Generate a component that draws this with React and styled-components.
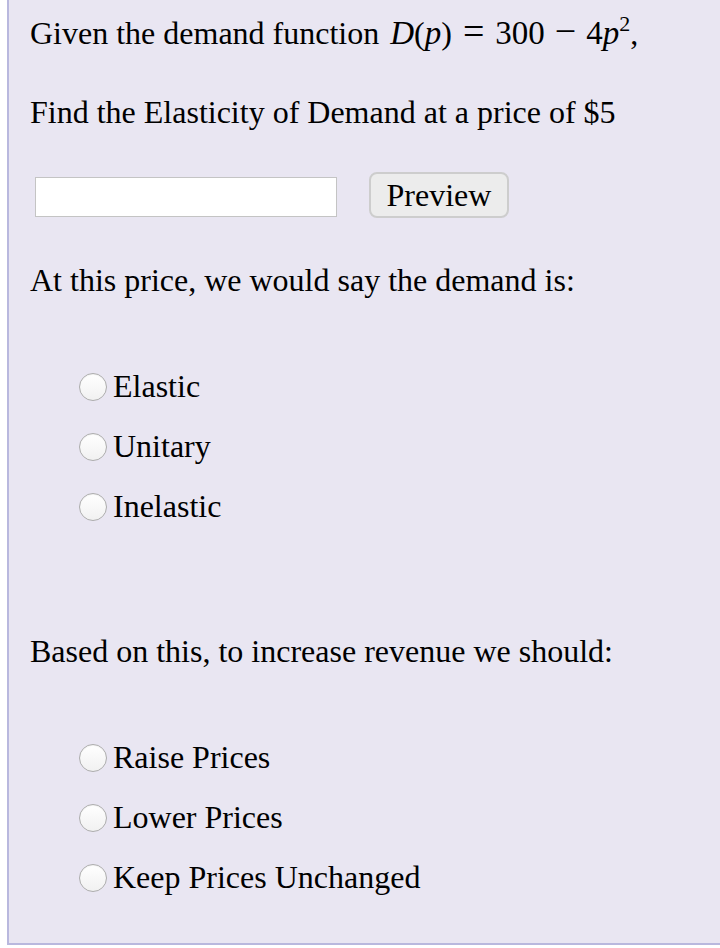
import React from "react";
import styled, { createGlobalStyle } from "styled-components";

const GlobalStyle = createGlobalStyle`
    body {
        margin: 0;
        background: #ffffff;
        font-family: "Liberation Serif", "Times New Roman", serif;
        color: #000;
        overflow: hidden;
    }
`;

const Panel = styled.div`
    margin-left: 7px;
    height: 945px;
    box-sizing: border-box;
    background-color: #e9e6f2;
    border-left: 2px solid #b9b8de;
    border-bottom: 2px solid #b9b8de;
    padding: 15px 0 0 21px;
    overflow: hidden;
`;

const Line = styled.div`
    font-size: 32px;
    line-height: 37px;
    height: 37px;
    white-space: nowrap;
    margin-top: ${(p) => p.$top || 0}px;
`;

const Math = styled.span`
    margin-left: 3px;
`;

const Var = styled.i`
    font-family: "Liberation Serif", serif;
    font-size: 33px;
`;

const Op = styled.span`
    display: inline-block;
    font-size: ${(p) => p.$size || 32}px;
    line-height: 30px;
    margin: 0 ${(p) => p.$space || 12}px;
`;

const Digits = styled.span`
    font-size: 33px;
`;

const Sup = styled.sup`
    font-size: 22px;
    line-height: 0;
    vertical-align: 13px;
`;

const AnswerRow = styled.div`
    display: flex;
    align-items: center;
    gap: 32px;
    margin-top: 41px;
    height: 46px;
    padding-left: 5px;
`;

const AnswerInput = styled.input`
    width: 302px;
    height: 40px;
    margin-top: 4px;
    box-sizing: border-box;
    border: 1px solid #c4c4c4;
    background: #ffffff;
    outline: none;
    font-size: 28px;
`;

const PreviewButton = styled.button`
    width: 140px;
    height: 46px;
    box-sizing: border-box;
    border: 2px solid #cdcdcd;
    border-radius: 8px;
    background: #ececec;
    font-family: "Liberation Serif", serif;
    font-size: 32px;
    color: #000;
    padding: 0;
`;

const Choices = styled.div`
    display: flex;
    flex-direction: column;
    gap: 23px;
    margin-top: ${(p) => p.$top}px;
    padding-left: 49px;
`;

const Choice = styled.label`
    display: flex;
    align-items: center;
    gap: 6px;
    height: 37px;
    font-size: 32px;
    line-height: 37px;
`;

const Radio = styled.input.attrs({ type: "radio" })`
    appearance: none;
    margin: 0;
    width: 28px;
    height: 28px;
    border-radius: 50%;
    border: 1px solid #adadad;
    background: linear-gradient(#ffffff, #f1f1f1);
    box-shadow: inset 0 1px 1px rgba(0, 0, 0, 0.05);
`;

const priceChoices = ["Elastic", "Unitary", "Inelastic"];
const revenueChoices = ["Raise Prices", "Lower Prices", "Keep Prices Unchanged"];

export default function App() {
    return (
        <>
            <GlobalStyle />
            <Panel>
                <Line>
                    Given the demand function{" "}
                    <Math>
                        <Var>D</Var>(<Var>p</Var>)
                        <Op $size={38} $space={11}>=</Op>
                        <Digits>300</Digits>
                        <Op $size={38} $space={10}>−</Op>
                        <Digits>4</Digits>
                        <Var>p</Var>
                        <Sup>2</Sup>,
                    </Math>
                </Line>
                <Line $top={42}>Find the Elasticity of Demand at a price of $5</Line>
                <AnswerRow>
                    <AnswerInput type="text" />
                    <PreviewButton type="button">Preview</PreviewButton>
                </AnswerRow>
                <Line $top={44}>At this price, we would say the demand is:</Line>
                <Choices $top={69}>
                    {priceChoices.map((c) => (
                        <Choice key={c}>
                            <Radio name="demand" />
                            {c}
                        </Choice>
                    ))}
                </Choices>
                <Line $top={108}>Based on this, to increase revenue we should:</Line>
                <Choices $top={69}>
                    {revenueChoices.map((c) => (
                        <Choice key={c}>
                            <Radio name="revenue" />
                            {c}
                        </Choice>
                    ))}
                </Choices>
            </Panel>
        </>
    );
}
